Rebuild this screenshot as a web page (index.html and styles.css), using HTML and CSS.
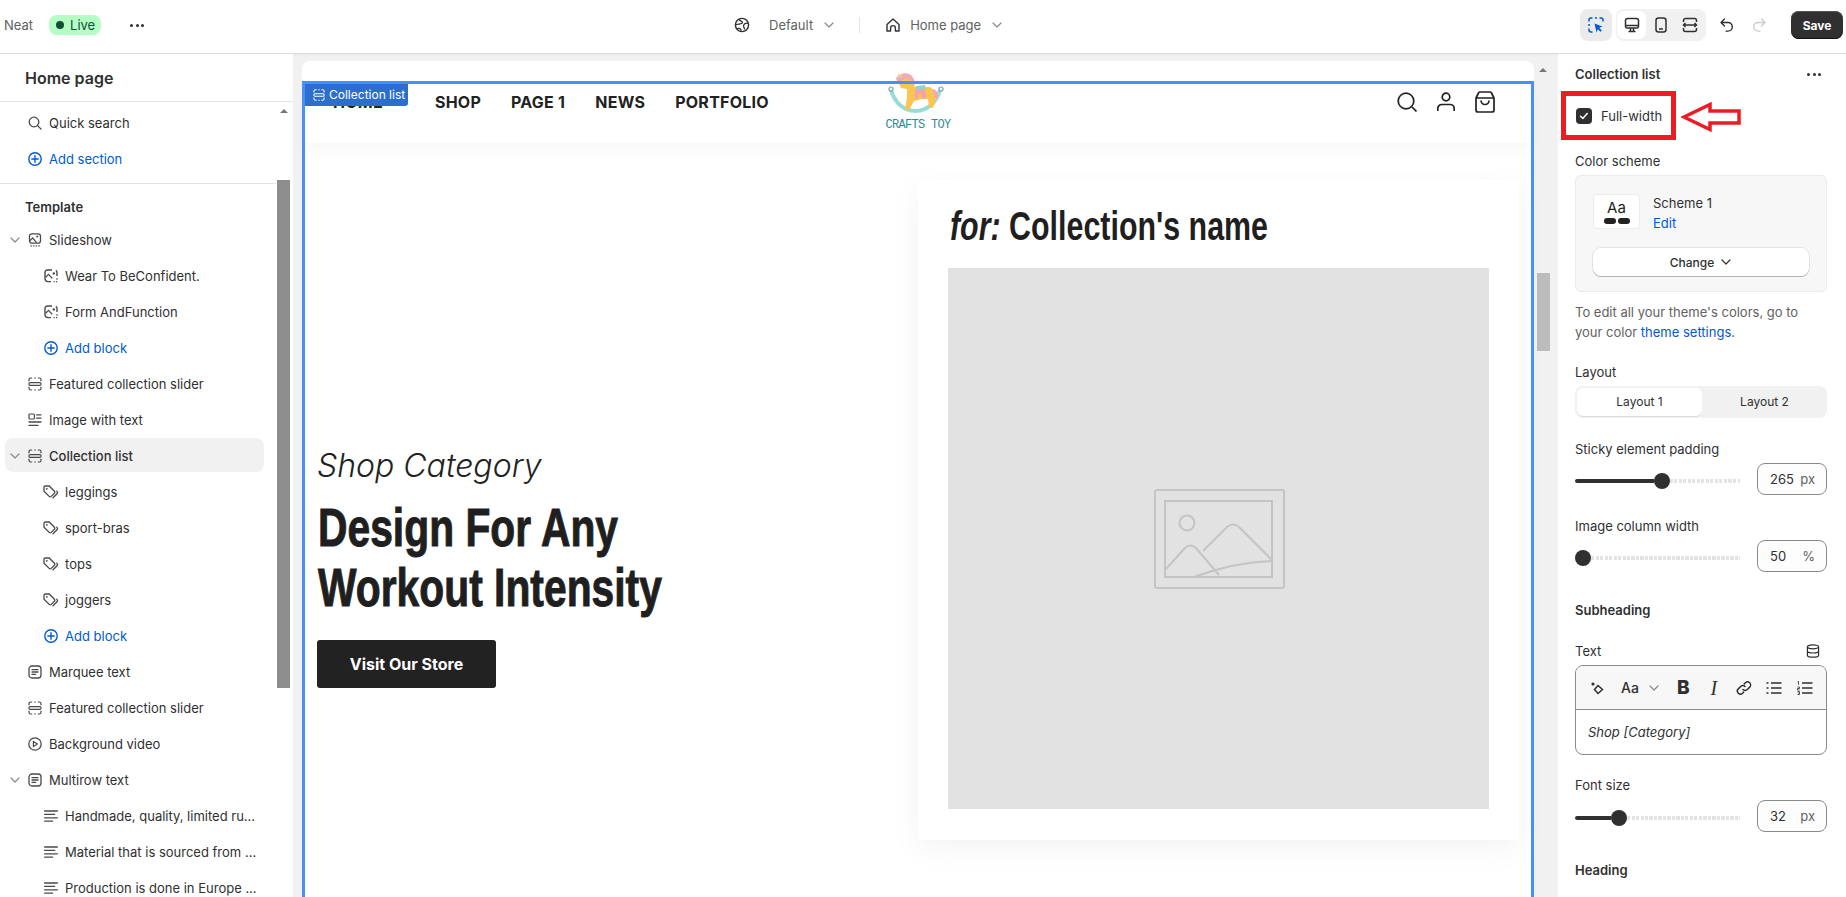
FILE: index.html
```html
<!DOCTYPE html>
<html>

<head>
    <title>Home page</title>
    <meta charset="utf-8">
    <link rel="stylesheet" href="styles.css">
</head>

<body>

    <svg class="defs" width="0" height="0">
        <symbol id="i-chev" viewBox="0 0 12 12"><path d="M2 4l4 4 4-4" fill="none" stroke="currentColor" stroke-width="1.2" stroke-linecap="round" stroke-linejoin="round"/></symbol>
        <symbol id="i-plus" viewBox="0 0 14 14"><circle cx="7" cy="7" r="6.2" fill="none" stroke="currentColor" stroke-width="1.4"/><path d="M7 3.8v6.4M3.8 7h6.4" stroke="currentColor" stroke-width="1.4" stroke-linecap="round"/></symbol>
        <symbol id="i-slides" viewBox="0 0 14 14"><rect x="1.5" y=".8" width="11" height="9.4" rx="2.5" fill="none" stroke="currentColor" stroke-width="1.3"/><circle cx="9.3" cy="3.6" r="1" fill="currentColor"/><path d="M1.800 7.800l2.800-2.800 4 4.600" fill="none" stroke="currentColor" stroke-width="1.2"/><path d="M2.500 12.800h1.400M5.200 12.800h1.400M7.800 12.800h1.400M10.400 12.800h1.400" stroke="currentColor" stroke-width="1.2"/></symbol>
        <symbol id="i-image" viewBox="0 0 14 14"><path d="M8 1H3.400A2.400 2.400 0 0 0 1 3.400v6.200a3 3 0 0 0 3 3h3M13 7V3.400a2.400 2.400 0 0 0-1.200-2" fill="none" stroke="currentColor" stroke-width="1.400"/><circle cx="9.800" cy="4.400" r="1.200" fill="currentColor"/><path d="M1.500 8.400l3-3 3.800 4" fill="none" stroke="currentColor" stroke-width="1.300"/><path d="M9.500 12.600h1.200M12 12.600h1.200M13 9.300v1.400" stroke="currentColor" stroke-width="1.300"/></symbol>
        <symbol id="i-section" viewBox="0 0 14 14"><path d="M1 4.200V2.800A1.800 1.800 0 0 1 2.800 1h1.400M6.200 1h1.600M9.800 1h1.400A1.800 1.800 0 0 1 13 2.800v1.400M1 9.800v1.400A1.800 1.800 0 0 0 2.800 13h1.400M6.200 13h1.600M9.800 13h1.400a1.800 1.800 0 0 0 1.800-1.800V9.800" fill="none" stroke="currentColor" stroke-width="1.200"/><rect x="1" y="5.600" width="12" height="2.800" rx="1.200" fill="none" stroke="currentColor" stroke-width="1.200"/></symbol>
        <symbol id="i-imgtext" viewBox="0 0 14 14"><rect x="1" y="1" width="5.400" height="5" rx="1" fill="none" stroke="currentColor" stroke-width="1.200"/><path d="M8.600 1.800H13M8.600 5.200H13M1 9h12M1 12.400h9" stroke="currentColor" stroke-width="1.300" stroke-linecap="round"/></symbol>
        <symbol id="i-tag" viewBox="0 0 16 14"><path d="M1 6.200V2.400A1.400 1.400 0 0 1 2.400 1h3.800l5.200 5.200a1.400 1.400 0 0 1 0 2l-3.200 3.200a1.400 1.400 0 0 1-2 0z" fill="none" stroke="currentColor" stroke-width="1.300"/><path d="M13.800 6.200a2 2 0 0 1 0 2.800L10 12.800" fill="none" stroke="currentColor" stroke-width="1.300" stroke-linecap="round"/><circle cx="3.800" cy="3.800" r=".9" fill="currentColor"/></symbol>
        <symbol id="i-text" viewBox="0 0 14 14"><rect x="1" y="1" width="12" height="12" rx="3" fill="none" stroke="currentColor" stroke-width="1.300"/><path d="M4 4.600h6M4 7h6M4 9.400h3.600" stroke="currentColor" stroke-width="1.300" stroke-linecap="round"/></symbol>
        <symbol id="i-play" viewBox="0 0 14 14"><circle cx="7" cy="7" r="6.200" fill="none" stroke="currentColor" stroke-width="1.300"/><path d="M5.400 4.400l4 2.600-4 2.600z" fill="none" stroke="currentColor" stroke-width="1.200" stroke-linejoin="round"/></symbol>
        <symbol id="i-lines" viewBox="0 0 14 14"><path d="M.6 2h12.800M.6 5.400h10M.6 8.800h12.800M.6 12.200h8" stroke="currentColor" stroke-width="1.300" stroke-linecap="round"/></symbol>
    </svg>

    <header class="topbar">
        <div class="top-left">
            <span class="shop-name">Neat</span>
            <span class="live"><i></i>Live</span>
            <span class="dots"><i></i><i></i><i></i></span>
        </div>
        <div class="top-center">
            <svg class="top-icon" viewBox="0 0 16 16"><circle cx="8" cy="8" r="6.600" fill="none" stroke="currentColor" stroke-width="1.400"/><path d="M5 2.200c.6 2 2.800 1.800 3.400 3 .5 1.200-1.600 1.600-3 1.800-1.400.2-3 .4-4 .8M14.200 6.400c-2-.6-4 .2-4.600 1.800-.6 1.600 1 2.200 1 4.400M3 11.800c1.600-1 3.400-.6 4.400 2" fill="none" stroke="currentColor" stroke-width="1.300"/></svg>
            <span class="top-link first">Default</span>
            <svg class="chev"><use href="#i-chev"/></svg>
            <span class="top-divider"></span>
            <svg class="top-icon" viewBox="0 0 16 16"><path d="M2 14V7.400L8 2l6 5.400V14h-3.600v-3a2.400 2.400 0 0 0-4.800 0v3z" fill="none" stroke="currentColor" stroke-width="1.400" stroke-linejoin="round"/></svg>
            <span class="top-link">Home page</span>
            <svg class="chev"><use href="#i-chev"/></svg>
        </div>
        <div class="top-right">
            <button class="inspector">
                <svg viewBox="0 0 16 16" width="16" height="16"><path d="M1 4.500V3a2 2 0 0 1 2-2h1.500M7 1h2M11.500 1H13a2 2 0 0 1 2 2v1.500M1 7v2M1 11.500V13a2 2 0 0 0 2 2h1.500" fill="none" stroke="#005bd3" stroke-width="1.500"/><path d="M6.500 6.500l8 3-3.300 1.300 2.600 2.700-1.300 1.300-2.700-2.600-1.300 3.300z" fill="#005bd3"/></svg>
            </button>
            <div class="devices">
                <button class="device active"><svg viewBox="0 0 16 16" width="16" height="16"><rect x="1.500" y="1.500" width="13" height="9.500" rx="2" fill="none" stroke="#303030" stroke-width="1.500"/><path d="M2 8.500h12" stroke="#303030" stroke-width="1.500"/><path d="M6.500 11v3M9.500 11v3M4.500 14.500h7" stroke="#303030" stroke-width="1.500"/></svg></button>
                <button class="device"><svg viewBox="0 0 16 16" width="16" height="16"><rect x="3" y="1" width="10" height="14" rx="2.500" fill="none" stroke="#303030" stroke-width="1.500"/><path d="M6 12h4" stroke="#303030" stroke-width="1.500"/></svg></button>
                <button class="device"><svg viewBox="0 0 16 16" width="16" height="16"><path d="M1.500 5V3.500a2 2 0 0 1 2-2h9a2 2 0 0 1 2 2V5M1.500 11v1.500a2 2 0 0 0 2 2h9a2 2 0 0 0 2-2V11" fill="none" stroke="#303030" stroke-width="1.500"/><path d="M1 8h14M3.500 6L1.500 8l2 2M12.500 6l2 2-2 2" fill="none" stroke="#303030" stroke-width="1.500"/></svg></button>
            </div>
            <svg class="history" viewBox="0 0 16 16"><path d="M5.500 2L2 5.500 5.500 9M2.500 5.500h6.500a4.300 4.300 0 0 1 0 8.600H7" fill="none" stroke="#303030" stroke-width="1.400" stroke-linecap="round" stroke-linejoin="round"/></svg>
            <svg class="history redo" viewBox="0 0 16 16"><path d="M10.500 2L14 5.500 10.500 9M13.500 5.500H7a4.300 4.300 0 0 0 0 8.600h2" fill="none" stroke="#cccccc" stroke-width="1.400" stroke-linecap="round" stroke-linejoin="round"/></svg>
            <button class="save">Save</button>
        </div>
    </header>

    <main class="editor-layout">

        <aside class="sidebar">
            <h1 class="side-title">Home page</h1>
            <div class="side-scroll">
                <div class="side-list">
                    <div class="top-rows">
                        <div class="row"><svg class="row-icon" viewBox="0 0 14 14"><circle cx="6" cy="6" r="4.800" fill="none" stroke="currentColor" stroke-width="1.300"/><path d="M9.600 9.600l3.400 3.400" stroke="currentColor" stroke-width="1.300" stroke-linecap="round"/></svg>Quick search</div>
                        <div class="row add"><svg class="row-icon"><use href="#i-plus"/></svg>Add section</div>
                    </div>
                    <h2 class="side-group">Template</h2>

                    <div class="row"><svg class="chev-row"><use href="#i-chev"/></svg><svg class="row-icon"><use href="#i-slides"/></svg>Slideshow</div>
                    <div class="row child"><svg class="row-icon"><use href="#i-image"/></svg>Wear To BeConfident.</div>
                    <div class="row child"><svg class="row-icon"><use href="#i-image"/></svg>Form AndFunction</div>
                    <div class="row child add"><svg class="row-icon"><use href="#i-plus"/></svg>Add block</div>
                    <div class="row"><svg class="row-icon"><use href="#i-section"/></svg>Featured collection slider</div>
                    <div class="row"><svg class="row-icon"><use href="#i-imgtext"/></svg>Image with text</div>
                    <div class="row selected"><svg class="chev-row"><use href="#i-chev"/></svg><svg class="row-icon"><use href="#i-section"/></svg>Collection list</div>
                    <div class="row child"><svg class="row-icon tag"><use href="#i-tag"/></svg>leggings</div>
                    <div class="row child"><svg class="row-icon tag"><use href="#i-tag"/></svg>sport-bras</div>
                    <div class="row child"><svg class="row-icon tag"><use href="#i-tag"/></svg>tops</div>
                    <div class="row child"><svg class="row-icon tag"><use href="#i-tag"/></svg>joggers</div>
                    <div class="row child add"><svg class="row-icon"><use href="#i-plus"/></svg>Add block</div>
                    <div class="row"><svg class="row-icon"><use href="#i-text"/></svg>Marquee text</div>
                    <div class="row"><svg class="row-icon"><use href="#i-section"/></svg>Featured collection slider</div>
                    <div class="row"><svg class="row-icon"><use href="#i-play"/></svg>Background video</div>
                    <div class="row"><svg class="chev-row"><use href="#i-chev"/></svg><svg class="row-icon"><use href="#i-text"/></svg>Multirow text</div>
                    <div class="row child"><svg class="row-icon"><use href="#i-lines"/></svg>Handmade, quality, limited ru...</div>
                    <div class="row child"><svg class="row-icon"><use href="#i-lines"/></svg>Material that is sourced from ...</div>
                    <div class="row child"><svg class="row-icon"><use href="#i-lines"/></svg>Production is done in Europe ...</div>
                </div>
                <div class="side-bar">
                    <span class="bar-arrow"></span>
                    <span class="bar-thumb"></span>
                </div>
            </div>
        </aside>

        <section class="preview">
            <div class="canvas">
                <div class="frame">
                    <span class="frame-tag"><svg width="12" height="12"><use href="#i-section"/></svg>Collection list</span>

                    <div class="store-head">
                        <nav class="store-nav">
                            <a>HOME</a>
                            <a>SHOP</a>
                            <a>PAGE 1</a>
                            <a>NEWS</a>
                            <a>PORTFOLIO</a>
                        </nav>
                        <div class="store-logo">
                            <svg viewBox="0 0 80 52" width="80" height="52">
                                <path d="M13 25C17 39 27 46 37.500 46S58 39 62 25" fill="none" stroke="#97dcd6" stroke-width="4"/>
                                <circle cx="13" cy="24" r="2" fill="#fff" stroke="#6fa8a2" stroke-width="1.200"/>
                                <circle cx="63" cy="24" r="2" fill="#fff" stroke="#6fa8a2" stroke-width="1.200"/>
                                <path d="M21 18L30 12l5 4 2 6h15l5 4 1 8-3 9-4-1-1-8h-6l-8 2-5 9-4-1 2-11V24l-6-1z" fill="#fdc451"/>
                                <path d="M37 24l10-1 1 10-3 1-3-7-3 7-2 0z" fill="#f1a3b0"/>
                                <path d="M38 21l9-1 1 4-10 1z" fill="#8fd4cc"/>
                                <path d="M18 13c3-4 9-6 13-4 4 2 6 6 6 11l-4-4-4-3-5 3-5 0z" fill="#f5a7b8"/>
                                <path d="M20 8l2 3 2-3 1 4-5 1z" fill="#e9c9a6"/>
                                <path d="M55 24c4 1 6 5 5 10l-3-2-2-5z" fill="#f5a7b8"/>
                            </svg>
                            <span>CRAFTS TOY</span>
                        </div>
                        <div class="store-icons">
                            <svg viewBox="0 0 20 20" width="20" height="20"><circle cx="9" cy="9" r="7.800" fill="none" stroke="#222" stroke-width="1.700"/><path d="M15 15l4.500 4.500" stroke="#222" stroke-width="1.700"/></svg>
                            <svg viewBox="1 0 18 20" width="18" height="20"><circle cx="10" cy="5" r="3.800" fill="none" stroke="#222" stroke-width="1.700"/><path d="M1.800 19v-2.500a4 4 0 0 1 4-4h8.400a4 4 0 0 1 4 4V19" fill="none" stroke="#222" stroke-width="1.700"/></svg>
                            <svg viewBox="0 0 20 22" width="20" height="22"><path d="M1 7V19a2 2 0 0 0 2 2h14a2 2 0 0 0 2-2V7zM1 7l2.500-5a1.500 1.500 0 0 1 1.300-1h10.400a1.500 1.500 0 0 1 1.300 1L19 7" fill="none" stroke="#222" stroke-width="1.700" stroke-linejoin="round"/><path d="M6 9.500a4 4 0 0 0 8 0" fill="none" stroke="#222" stroke-width="1.700"/></svg>
                        </div>
                    </div>

                    <div class="store-body">
                        <div class="collection-text">
                            <p class="sub">Shop Category</p>
                            <h2 class="big">Design For Any<br>Workout Intensity</h2>
                            <button class="visit">Visit Our Store</button>
                        </div>
                        <article class="collection-card">
                            <h3 class="card-title"><em>for:</em> Collection's name</h3>
                            <div class="placeholder">
                                <svg viewBox="0 0 131 100" width="131" height="100">
                                    <g fill="none" stroke="#c4c4c4" stroke-width="2">
                                        <rect x="1" y="1" width="129" height="98" rx="2"/>
                                        <rect x="11" y="12" width="107" height="76"/>
                                        <circle cx="33" cy="34" r="7.500"/>
                                        <path d="M11 81l20-22q6-5 11 0l23 27M49 62l24-24q6-5 12 0l33 33M40 88c24-9 50-15 78-16"/>
                                    </g>
                                </svg>
                            </div>
                        </article>
                    </div>
                </div>
            </div>
            <div class="preview-bar">
                <span class="bar-arrow"></span>
                <span class="preview-thumb"></span>
            </div>
        </section>

        <aside class="panel">
            <div class="panel-head">
                <h2>Collection list</h2>
                <span class="dots"><i></i><i></i><i></i></span>
            </div>
            <label class="check-row"><span class="check"><svg viewBox="0 0 16 16" width="16" height="16"><path d="M4.500 8.300l2.300 2.200 4.400-5" fill="none" stroke="#fff" stroke-width="1.500" stroke-linecap="round" stroke-linejoin="round"/></svg></span>Full-width</label>

            <div class="annotation-box"></div>
            <svg class="annotation-arrow" viewBox="0 0 60 30" width="60" height="30"><path d="M3 15L29 2.500V9h29v12H29v6.500z" fill="#fff" stroke="#ed1c24" stroke-width="3.500"/></svg>

            <div class="field scheme-field">
                <div class="label">Color scheme</div>
                <div class="scheme">
                    <div class="scheme-top">
                        <div class="swatch">
                            <span>Aa</span>
                            <div class="pills"><i></i><i></i></div>
                        </div>
                        <div class="scheme-name">
                            <div>Scheme 1</div>
                            <a class="link">Edit</a>
                        </div>
                    </div>
                    <button class="change">Change <svg width="12" height="12"><use href="#i-chev"/></svg></button>
                </div>
            </div>

            <p class="help">To edit all your theme's colors, go to your color <a class="link">theme settings</a>.</p>

            <div class="field">
                <div class="label">Layout</div>
                <div class="segments">
                    <span class="segment on">Layout 1</span>
                    <span class="segment">Layout 2</span>
                </div>
            </div>

            <div class="field">
                <div class="label">Sticky element padding</div>
                <div class="slider-row">
                    <div class="slider"><span class="fill" style="width:79px"></span><span class="thumb"></span><span class="rest"></span></div>
                    <div class="number"><span>265</span><span class="unit">px</span></div>
                </div>
            </div>

            <div class="field">
                <div class="label">Image column width</div>
                <div class="slider-row">
                    <div class="slider"><span class="fill" style="width:0"></span><span class="thumb"></span><span class="rest"></span></div>
                    <div class="number"><span>50</span><span class="unit">%</span></div>
                </div>
            </div>

            <h3 class="panel-group">Subheading</h3>

            <div class="field">
                <div class="label label-row">Text
                    <svg viewBox="0 0 14 14" width="14" height="14"><g fill="none" stroke="#303030" stroke-width="1.200"><ellipse cx="7" cy="2.800" rx="5.600" ry="2"/><path d="M1.400 2.800v8.400c0 1.100 2.500 2 5.600 2s5.600-.9 5.600-2V2.800M1.400 7c0 1.100 2.500 2 5.600 2s5.600-.9 5.600-2"/></g></svg>
                </div>
                <div class="rte">
                    <div class="rte-tools">
                        <svg class="sparkle" viewBox="0 0 14 14" width="14" height="14"><path d="M8 4.500l4.500 4-4.500 4-3.500-4z" fill="none" stroke="#303030" stroke-width="1.500"/><circle cx="3" cy="3" r="1.600" fill="#303030"/></svg>
                        <span class="tool-aa">Aa</span>
                        <svg class="tool-chev" width="12" height="12"><use href="#i-chev"/></svg>
                        <b class="tool-b">B</b>
                        <i class="tool-i">I</i>
                        <svg class="tool-link" viewBox="0 0 16 16" width="16" height="16"><path d="M7 9.500a3 3 0 0 0 4.300 0l2.400-2.400a3 3 0 0 0-4.300-4.300L8.300 4M9 6.500a3 3 0 0 0-4.300 0L2.300 8.900a3 3 0 0 0 4.300 4.300L7.700 12" fill="none" stroke="#303030" stroke-width="1.500" stroke-linecap="round"/></svg>
                        <svg class="tool-list" viewBox="0 0 16 14" width="16" height="14"><path d="M5 2h10.500M5 7h10.500M5 12h10.500M.5 2h2M.5 7h2M.5 12h2" stroke="#303030" stroke-width="1.500"/></svg>
                        <svg class="tool-ol" viewBox="0 0 16 14" width="16" height="14"><path d="M5 2h10.500M5 7h10.500M5 12h10.500" stroke="#303030" stroke-width="1.500"/><path d="M.5 1l1-.5V4M.5 6h2v1.500h-2V9h2M.5 10.500h2v3h-2M.8 12h1.500" fill="none" stroke="#303030" stroke-width=".8"/></svg>
                    </div>
                    <div class="rte-body">Shop [Category]</div>
                </div>
            </div>

            <div class="field field-size">
                <div class="label">Font size</div>
                <div class="slider-row">
                    <div class="slider"><span class="fill" style="width:36px"></span><span class="thumb"></span><span class="rest"></span></div>
                    <div class="number"><span>32</span><span class="unit">px</span></div>
                </div>
            </div>

            <h3 class="panel-group">Heading</h3>
        </aside>

    </main>

</body></html>
```

FILE: styles.css
```css
* {
    box-sizing: border-box;
}

html,
body {
    margin: 0;
    height: 897px;
    overflow: hidden;
}

body {
    font-family: Inter, "Noto Sans", sans-serif;
    font-size: 13px;
    line-height: 20px;
    color: #303030;
    background-color: #f1f1f1;
}

h1,
h2,
h3,
p {
    margin: 0;
}

button {
    font-family: inherit;
    border: 0;
    padding: 0;
}

.defs {
    position: absolute;
}

/* top bar */

.topbar {
    display: grid;
    grid-template-columns: 729px 1fr auto;
    align-items: center;
    height: 54px;
    padding: 0 3px 3px 4px;
    background-color: white;
    border-bottom: 1px solid #dcdcdc;
    box-shadow: 0 1px 2px rgba(0, 0, 0, 0.05);
}

.top-left,
.top-center,
.top-right {
    display: flex;
    align-items: center;
}

.shop-name {
    color: #616161;
}

.live {
    display: flex;
    align-items: center;
    gap: 6px;
    width: 52px;
    height: 20px;
    margin-left: 16px;
    padding-left: 7px;
    border-radius: 8px;
    background-color: #b4fec5;
    color: #0c5132;
}

.live i {
    width: 8px;
    height: 8px;
    border-radius: 50%;
    background-color: #0c5132;
}

.dots {
    display: flex;
    gap: 2.500px;
}

.dots i {
    width: 3px;
    height: 3px;
    border-radius: 50%;
    background-color: #303030;
}

.top-left .dots {
    margin-left: 29px;
}

.top-icon {
    width: 16px;
    height: 16px;
    margin-left: 1px;
    color: #303030;
}

.top-link {
    margin-left: 9px;
    color: #616161;
}

.top-link.first {
    margin-left: 19px;
}

.chev {
    width: 12px;
    height: 12px;
    margin-left: 10px;
    color: #8a8a8a;
}

.top-divider {
    width: 1px;
    height: 16px;
    margin: 0 24px 0 24px;
    background-color: #e3e3e3;
}

.inspector {
    display: flex;
    align-items: center;
    justify-content: center;
    width: 32px;
    height: 32px;
    border-radius: 8px;
    background-color: #ebebeb;
}

.devices {
    display: flex;
    gap: 0;
    width: 90px;
    height: 32px;
    margin-left: 4px;
    padding: 2px 1px;
    border-radius: 8px;
    background-color: #f1f1f1;
}

.device {
    display: flex;
    align-items: center;
    justify-content: center;
    width: 29px;
    height: 28px;
    border-radius: 7px;
    background-color: transparent;
}

.device.active {
    background-color: white;
}

.history {
    width: 16px;
    height: 16px;
    margin-left: 13px;
}

.history.redo {
    margin-left: 16px;
}

.save {
    width: 52px;
    height: 28px;
    margin-left: 24px;
    border-radius: 8px;
    background-color: #303030;
    box-shadow: inset 0 1px 0 #555, inset 0 -1px 0 #111;
    color: white;
    font-size: 12px;
    font-weight: 650;
}

/* three columns under the top bar */

.editor-layout {
    display: flex;
    height: 843px;
}

.sidebar {
    flex: 0 0 293px;
    background-color: white;
}

.side-title {
    height: 48px;
    padding: 14px 0 0 25px;
    font-size: 16px;
    line-height: 20px;
    font-weight: 600;
    border-bottom: 1px solid #e3e3e3;
}

.side-scroll {
    display: flex;
    height: 795px;
    overflow: hidden;
}

.side-list {
    flex: 1;
    min-width: 0;
    padding-top: 2px;
}

.top-rows {
    padding-bottom: 7px;
    border-bottom: 1px solid #e3e3e3;
}

.side-group {
    height: 37px;
    padding: 13px 0 0 25px;
    font-size: 13px;
    font-weight: 600;
}

.row {
    position: relative;
    display: flex;
    align-items: center;
    height: 36px;
    padding: 2px 0 0 28px;
    white-space: nowrap;
    color: #303030;
}

.row.child {
    padding-left: 44px;
}

.row.add {
    color: #005bd3;
}

.row.selected {
    margin: 1px 12px 1px 5px;
    height: 34px;
    padding-left: 23px;
    border-radius: 8px;
    background-color: #f1f1f1;
    font-weight: 500;
}

.row-icon {
    flex: none;
    width: 14px;
    height: 14px;
    margin-right: 7px;
    color: #4a4a4a;
}

.row-icon.tag {
    width: 16px;
    margin: 0 6px 0 -1px;
}

.row.add .row-icon {
    color: #005bd3;
}

.chev-row {
    position: absolute;
    left: 9px;
    top: 13px;
    width: 12px;
    height: 12px;
    color: #8a8a8a;
}

.row.selected .chev-row {
    left: 4px;
    top: 12px;
}

.side-bar {
    display: flex;
    flex-direction: column;
    align-items: center;
    flex: 0 0 17px;
    padding: 7px 2px 0 0;
}

.bar-arrow {
    flex: none;
    width: 0;
    height: 0;
    border-left: 4px solid transparent;
    border-right: 4px solid transparent;
    border-bottom: 4px solid #777;
}

.bar-thumb {
    width: 13px;
    height: 508px;
    margin-top: 67px;
    background-color: #8d8d8d;
}

/* preview */

.preview {
    flex: 1;
    display: flex;
    padding: 7px 0 0 9px;
    min-width: 0;
}

.canvas {
    display: flex;
    flex-direction: column;
    width: 1232px;
    padding-top: 20px;
    border-radius: 8px 8px 0 0;
    background-color: white;
}

.frame {
    position: relative;
    flex: 1;
    padding: 3px 3px 0;
}

.frame::after {
    content: "";
    position: absolute;
    inset: 0;
    border: 3px solid #458fff;
    border-bottom: 0;
    pointer-events: none;
}

.frame-tag {
    position: absolute;
    z-index: 1;
    left: 3px;
    top: 3px;
    display: flex;
    align-items: center;
    gap: 4px;
    width: 103px;
    height: 22px;
    padding-left: 8px;
    border-radius: 0 0 3px 0;
    background-color: #2c6ecb;
    color: white;
    font-size: 12px;
}

.store-head {
    display: grid;
    grid-template-columns: 1fr auto 1fr;
    grid-template-rows: 59px;
    align-items: center;
    height: 59px;
    padding: 0 36px 0 28px;
    box-shadow: 0 8px 16px rgba(0, 0, 0, 0.03);
}

.store-nav {
    display: flex;
    gap: 30px;
    margin-bottom: 23px;
    font-size: 16px;
    font-weight: 700;
    letter-spacing: 0.25px;
    color: #222;
}

.store-nav a:first-child {
    margin-right: 22px;
}

.store-logo {
    display: flex;
    flex-direction: column;
    align-items: center;
    margin: 0 0 30px 8px;
    font-family: "Liberation Mono", monospace;
    font-size: 12px;
    line-height: 13px;
    letter-spacing: -0.7px;
    color: #2b8e96;
}

.store-logo span {
    margin-top: 2px;
}

.store-icons {
    display: flex;
    justify-content: flex-end;
    gap: 20px;
    align-items: center;
    margin-bottom: 23px;
}

.store-body {
    display: flex;
    justify-content: space-between;
}

.collection-text {
    padding: 303px 0 0 12px;
}

.sub {
    font-size: 32px;
    line-height: 40px;
    font-style: italic;
    font-weight: 300;
    color: #222;
}

/* no narrow font installed, so the wide one gets squeezed */
.big {
    margin-top: 12px;
    margin-left: 1px;
    font-family: "Liberation Sans", sans-serif;
    font-size: 53px;
    line-height: 60px;
    font-weight: 700;
    color: #1f1f1f;
    white-space: nowrap;
    transform: scaleX(0.77);
    transform-origin: left;
    -webkit-text-stroke: 1px #1f1f1f;
}

.visit {
    display: block;
    width: 179px;
    height: 48px;
    margin-top: 22px;
    border-radius: 3px;
    background-color: #222;
    color: white;
    font-size: 16px;
    font-weight: 700;
}

.collection-card {
    width: 601px;
    height: 660px;
    margin: 37px 12px 0 0;
    padding: 22px 30px 0;
    background-color: white;
    box-shadow: 0 8px 30px rgba(0, 0, 0, 0.05);
}

.card-title {
    margin-left: 2px;
    font-family: "Liberation Sans", sans-serif;
    font-size: 40px;
    line-height: 48px;
    font-weight: 700;
    color: #1f1f1f;
    white-space: nowrap;
    transform: scaleX(0.76);
    transform-origin: left;
}

.placeholder {
    display: flex;
    align-items: center;
    justify-content: center;
    height: 541px;
    margin-top: 18px;
    padding-left: 2px;
    background-color: #e2e2e2;
}

.preview-bar {
    display: flex;
    flex-direction: column;
    align-items: center;
    flex: 0 0 18px;
    padding-top: 7px;
}

.preview-thumb {
    width: 13px;
    height: 78px;
    margin-top: 201px;
    background-color: #bcbcbc;
}

/* settings panel */

.panel {
    position: relative;
    flex: 0 0 286px;
    padding: 10px 19px 0 17px;
    background-color: white;
}

.panel-head {
    display: flex;
    justify-content: space-between;
    align-items: center;
}

.panel-head h2 {
    font-size: 13px;
    font-weight: 600;
}

.panel-head .dots {
    margin-right: 6px;
}

.check-row {
    display: flex;
    align-items: center;
    gap: 9px;
    margin: 22px 0 0 1px;
}

.check {
    width: 16px;
    height: 16px;
    border-radius: 4px;
    background-color: #303030;
}

.check svg {
    display: block;
}

.annotation-box {
    position: absolute;
    left: 3px;
    top: 37px;
    width: 115px;
    height: 49px;
    border: 5px solid #ed1c24;
}

.annotation-arrow {
    position: absolute;
    left: 123px;
    top: 48px;
}

.field {
    margin-top: 20px;
}

.scheme-field {
    margin-top: 24px;
}

.label {
    margin-bottom: 3px;
    line-height: 22px;
}

.label-row {
    display: flex;
    justify-content: space-between;
    align-items: center;
    padding-right: 7px;
}

.scheme {
    height: 117px;
    padding: 18px 17px 0;
    border: 1px solid #ebebeb;
    border-radius: 6px;
    background-color: #f7f7f7;
}

.scheme-top {
    display: flex;
    gap: 13px;
}

.swatch {
    display: flex;
    flex-direction: column;
    align-items: center;
    width: 47px;
    height: 35px;
    padding-top: 5px;
    border: 1px solid #ebebeb;
    border-radius: 4px;
    background-color: white;
    color: #222;
    font-size: 15px;
    line-height: 16px;
}

.pills {
    display: flex;
    gap: 2px;
    margin-top: 2px;
}

.pills i {
    width: 12px;
    height: 6px;
    border-radius: 3px;
    background-color: #222;
}

.scheme-name {
    margin-top: -1px;
}

.link {
    color: #005bd3;
}

.change {
    display: flex;
    align-items: center;
    justify-content: center;
    gap: 6px;
    width: 216px;
    height: 28px;
    margin-top: 15px;
    border-radius: 8px;
    background-color: white;
    box-shadow: 0 1px 0 #b5b5b5, 0 0 0 1px #e3e3e3;
    color: #303030;
    font-size: 12px;
    font-weight: 500;
}

.help {
    margin-top: 10px;
    margin-bottom: -1px;
    color: #616161;
}

.segments {
    display: grid;
    grid-template-columns: 125px 1fr;
    height: 32px;
    padding: 2px 0 2px 2px;
    border-radius: 8px;
    background-color: #f1f1f1;
    text-align: center;
    font-size: 12px;
    line-height: 28px;
}

.segment.on {
    border-radius: 6px;
    background-color: white;
    box-shadow: 0 1px 0 #dcdcdc;
}

.slider-row {
    display: flex;
    justify-content: space-between;
    align-items: center;
    height: 32px;
}

.slider {
    display: flex;
    align-items: center;
    width: 165px;
    margin-top: 4px;
}

.fill {
    height: 4px;
    border-radius: 2px 0 0 2px;
    background-color: #303030;
}

.thumb {
    flex: none;
    width: 16px;
    height: 16px;
    border-radius: 50%;
    background-color: #303030;
}

.rest {
    flex: 1;
    height: 4px;
    background-image: repeating-linear-gradient(90deg, #e3e3e3 0 3px, transparent 3px 4.500px);
}

.number {
    display: flex;
    justify-content: space-between;
    width: 70px;
    height: 32px;
    padding: 0 11px 0 12px;
    border: 1px solid #8a8a8a;
    border-radius: 8px;
    background-color: #fdfdfd;
    font-size: 13px;
    line-height: 30px;
}

.unit {
    color: #616161;
}

.panel-group {
    margin-top: 28px;
    font-size: 13px;
    font-weight: 600;
}

.rte {
    height: 90px;
    border: 1px solid #8a8a8a;
    border-radius: 8px;
    overflow: hidden;
}

.rte-tools {
    display: flex;
    align-items: center;
    height: 44px;
    padding-left: 14px;
    border-bottom: 1px solid #8a8a8a;
    background-color: #f7f7f7;
}

.tool-aa {
    margin-left: 17px;
    font-size: 14px;
    font-weight: 500;
}

.tool-chev {
    margin-left: 9px;
    color: #8a8a8a;
}

.tool-b {
    margin-left: 17px;
    font-size: 19px;
    font-weight: 800;
}

.tool-i {
    margin-left: 21px;
    font-family: "Liberation Serif", serif;
    font-size: 20px;
}

.tool-link {
    margin-left: 19px;
}

.tool-list {
    margin-left: 14px;
}

.tool-ol {
    margin-left: 15px;
}

.rte-body {
    padding: 12px 12px 0;
    font-style: italic;
}

.field-size {
    margin-top: 19px;
}

.field-size .label {
    margin-bottom: 4px;
}
```
